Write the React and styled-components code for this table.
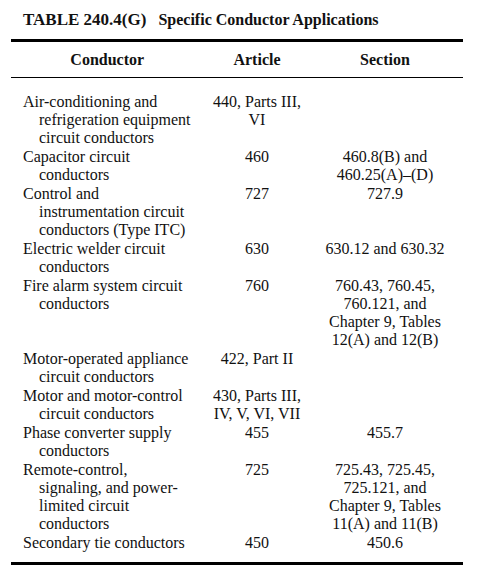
import React from "react";
import styled, { createGlobalStyle } from "styled-components";

const GlobalStyle = createGlobalStyle`
  html, body {
    margin: 0;
    padding: 0;
    background: #fff;
  }
  body {
    font-family: "Liberation Serif", "Times New Roman", serif;
    color: #111;
  }
`;

const rows = [
  {
    conductor: "Air-conditioning and refrigeration equipment circuit conductors",
    article: "440, Parts III, VI",
    section: "",
  },
  {
    conductor: "Capacitor circuit conductors",
    article: "460",
    section: "460.8(B) and 460.25(A)–(D)",
  },
  {
    conductor: "Control and instrumentation circuit conductors (Type ITC)",
    article: "727",
    section: "727.9",
  },
  {
    conductor: "Electric welder circuit conductors",
    article: "630",
    section: "630.12 and 630.32",
  },
  {
    conductor: "Fire alarm system circuit conductors",
    article: "760",
    section: "760.43, 760.45, 760.121, and Chapter 9, Tables 12(A) and 12(B)",
  },
  {
    conductor: "Motor-operated appliance circuit conductors",
    article: "422, Part II",
    section: "",
  },
  {
    conductor: "Motor and motor-control circuit conductors",
    article: "430, Parts III, IV, V, VI, VII",
    section: "",
  },
  {
    conductor: "Phase converter supply conductors",
    article: "455",
    section: "455.7",
  },
  {
    conductor: "Remote-control, signaling, and power-limited circuit conductors",
    article: "725",
    section: "725.43, 725.45, 725.121, and Chapter 9, Tables 11(A) and 11(B)",
  },
  {
    conductor: "Secondary tie conductors",
    article: "450",
    section: "450.6",
  },
];

const Page = styled.div`
  padding: 10px 0 0 0;
`;

const Title = styled.h1`
  margin: 0 0 9px 23px;
  font-size: 16px;
  line-height: 20px;
  font-weight: bold;
  display: flex;
  align-items: baseline;
  gap: 12px;
`;

const TableNo = styled.span`
  font-size: 17px;
`;

const Table = styled.div`
  margin-left: 11px;
  width: 452px;
  border-bottom: 3px solid #000;
  padding-bottom: 9px;
`;

const Row = styled.div`
  display: grid;
  grid-template-columns: 196px 100px 156px;
  font-size: 16px;
  line-height: 18px;
  padding-bottom: ${(p) => (p.$head ? "8px" : "1px")};
  padding-top: ${(p) => (p.$head ? "9px" : "0")};
  font-weight: ${(p) => (p.$head ? "bold" : "normal")};
`;

const Head = styled(Row)`
  border-top: 3px solid #000;
  border-bottom: 1px solid #000;
  margin-bottom: 15px;
`;

const ConductorCell = styled.div`
  padding: 0 15.5px 0 ${(p) => (p.$head ? "12px" : "28px")};
  text-indent: ${(p) => (p.$head ? "0" : "-16px")};
  text-align: ${(p) => (p.$head ? "center" : "left")};
`;

const ArticleCell = styled.div`
  text-align: center;
`;

const SectionCell = styled.div`
  padding: 0 14px;
  text-align: center;
`;

export default function App() {
  return (
    <Page>
      <GlobalStyle />
      <Title>
        <TableNo>TABLE 240.4(G)</TableNo>
        <span>Specific Conductor Applications</span>
      </Title>
      <Table>
        <Head $head>
          <ConductorCell $head>Conductor</ConductorCell>
          <ArticleCell>Article</ArticleCell>
          <SectionCell>Section</SectionCell>
        </Head>
        {rows.map((r) => (
          <Row key={r.conductor}>
            <ConductorCell>{r.conductor}</ConductorCell>
            <ArticleCell>{r.article}</ArticleCell>
            <SectionCell>{r.section}</SectionCell>
          </Row>
        ))}
      </Table>
    </Page>
  );
}
